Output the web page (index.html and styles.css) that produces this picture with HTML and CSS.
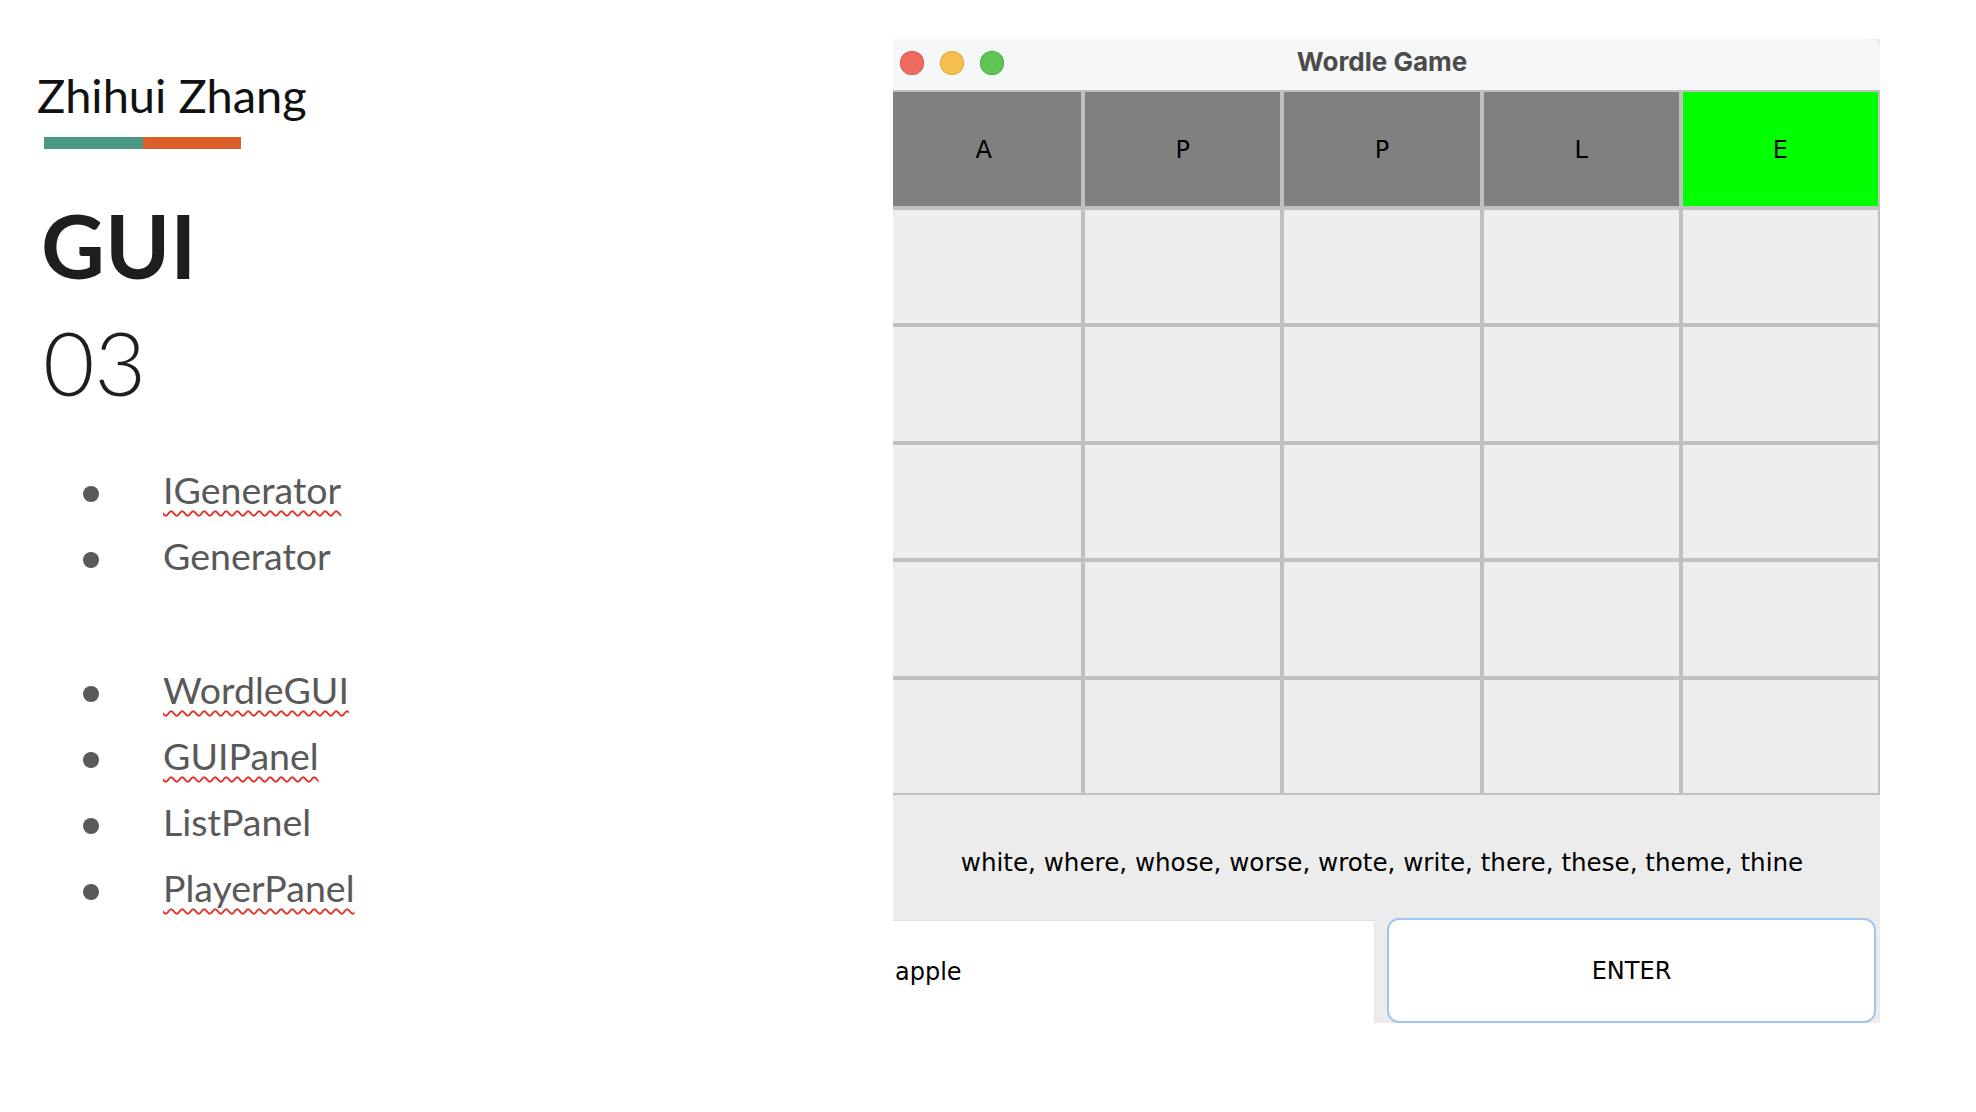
FILE: index.html
```html
<!DOCTYPE html>
<html lang="en">
<head>
<meta charset="utf-8">
<title>GUI 03 – Wordle Game</title>
<link rel="stylesheet" href="styles.css">
</head>
<body>
<div class="page">
  <section class="slide-left">
    <h2 class="author">Zhihui Zhang</h2>
    <div class="accent"><span class="accent-teal"></span><span class="accent-orange"></span></div>
    <h1 class="title">GUI</h1>
    <div class="number">03</div>
    <ul class="topics">
      <li><span class="misspelled">IGenerator</span></li>
      <li><span>Generator</span></li>
      <li class="blank"></li>
      <li><span class="misspelled">WordleGUI</span></li>
      <li><span class="misspelled">GUIPanel</span></li>
      <li><span>ListPanel</span></li>
      <li><span class="misspelled">PlayerPanel</span></li>
    </ul>
  </section>

  <section class="stage">
    <div class="frame">
      <div class="window">
        <div class="titlebar">
          <div class="lights">
            <span class="light light-red"></span>
            <span class="light light-yellow"></span>
            <span class="light light-green"></span>
          </div>
          <div class="window-title">Wordle Game</div>
          <div></div>
        </div>
        <div class="board">
          <div class="cell cell-gray">A</div>
          <div class="cell cell-gray">P</div>
          <div class="cell cell-gray">P</div>
          <div class="cell cell-gray">L</div>
          <div class="cell cell-green">E</div>
          <div class="cell"></div><div class="cell"></div><div class="cell"></div><div class="cell"></div><div class="cell"></div>
          <div class="cell"></div><div class="cell"></div><div class="cell"></div><div class="cell"></div><div class="cell"></div>
          <div class="cell"></div><div class="cell"></div><div class="cell"></div><div class="cell"></div><div class="cell"></div>
          <div class="cell"></div><div class="cell"></div><div class="cell"></div><div class="cell"></div><div class="cell"></div>
          <div class="cell"></div><div class="cell"></div><div class="cell"></div><div class="cell"></div><div class="cell"></div>
        </div>
        <div class="message">white, where, whose, worse, wrote, write, there, these, theme, thine</div>
        <div class="controls">
          <div class="guess-input">apple</div>
          <div class="enter-btn">ENTER</div>
        </div>
      </div>
    </div>
  </section>
</div>
</body>
</html>
```

FILE: styles.css
```css
* { box-sizing: border-box; }

html, body {
  margin: 0;
  padding: 0;
  background: #ffffff;
}

.page {
  display: flex;
  width: 1976px;
  height: 1112px;
  overflow: hidden;
}

/* ---------- Left slide column ---------- */
.slide-left {
  flex: none;
  width: 893px;
  padding-left: 41px;
  font-family: "Lato", "Open Sans", sans-serif;
}

.author {
  margin: 67px 0 0 -4px;
  font-size: 47px;
  line-height: 56px;
  font-weight: 400;
  color: #111111;
}

.accent {
  display: flex;
  margin: 14px 0 0 3px;
  height: 12px;
  width: 197px;
}
.accent-teal { flex: none; width: 99px; background: #4a9987; }
.accent-orange { flex: 1; background: #dc6029; }

.title {
  margin: 46px 0 0 0;
  font-size: 88px;
  line-height: 100px;
  font-weight: 700;
  color: #1e1e1e;
}

.number {
  margin-top: 17px;
  padding-left: 2px;
  font-size: 89px;
  line-height: 100px;
  font-weight: 300;
  color: #1e1e1e;
}

.topics {
  list-style: none;
  margin: 45px 0 0 0;
  padding: 0 0 0 42px;
  font-size: 37.5px;
  line-height: 66px;
  color: #595959;
}
.topics li {
  display: flex;
  align-items: flex-start;
  height: 66px;
}
.topics li.blank { height: 68px; }
.topics li::before {
  content: "";
  flex: none;
  width: 16px;
  height: 16px;
  margin-top: 29px;
  margin-right: 64px;
  border-radius: 50%;
  background: #595959;
}
.topics li.blank::before { display: none; }

.misspelled {
  text-decoration: underline wavy #e0342b;
  text-decoration-thickness: 1.5px;
  text-underline-offset: 6px;
}

/* ---------- Right: Wordle window ---------- */
.stage {
  flex: none;
  padding-top: 39px;
}

.frame {
  width: 987px;
  height: 984px;
  overflow: hidden;
  background: #8fc5b2;
}

.window {
  width: 996px;
  height: 984px;
  margin-left: -9px;
  background: #ececec;
  font-family: "DejaVu Sans", "Verdana", sans-serif;
  color: #000000;
}

.titlebar {
  display: grid;
  grid-template-columns: 1fr auto 1fr;
  align-items: center;
  height: 51px;
  padding-bottom: 4px;
  background: #f6f7f7;
  border-top-right-radius: 10px;
}

.lights {
  display: flex;
  gap: 16px;
  padding-left: 16px;
}
.light {
  width: 24px;
  height: 24px;
  border-radius: 50%;
}
.light-red { background: #ed6a5e; box-shadow: inset 0 0 0 1px #e05a4f; }
.light-yellow { background: #f5bf4f; box-shadow: inset 0 0 0 1px #e4ab3c; }
.light-green { background: #61c554; box-shadow: inset 0 0 0 1px #52b346; }

.window-title {
  font-family: "Inter", "Liberation Sans", sans-serif;
  font-weight: 700;
  font-size: 26px;
  line-height: 30px;
  margin-top: -1px;
  color: #4b4b4b;
}

.board {
  display: grid;
  grid-template-columns: repeat(5, 1fr);
  grid-auto-rows: 117.5px;
}

.cell {
  display: flex;
  align-items: center;
  justify-content: center;
  padding-top: 3px;
  border: 2px solid #c0c0c0;
  background: #eeeeee;
  font-size: 24px;
}
.cell-gray { background: #808080; }
.cell-green { background: #00ff00; }

.message {
  display: flex;
  align-items: center;
  justify-content: center;
  height: 123px;
  padding-top: 12px;
  font-size: 24.6px;
  background: #ececec;
}

.controls {
  display: flex;
  height: 105px;
}

.guess-input {
  flex: none;
  width: 491px;
  margin-top: 2px;
  display: flex;
  align-items: center;
  padding-left: 11px;
  background: #ffffff;
  border-top: 1px solid #dedede;
  border-right: 1px solid #e4e4e4;
  font-size: 24px;
}

.enter-btn {
  flex: none;
  width: 489px;
  margin-left: 12px;
  display: flex;
  align-items: center;
  justify-content: center;
  background: #ffffff;
  border: 2px solid #9ec6f1;
  border-radius: 12px;
  font-size: 24px;
}
```
